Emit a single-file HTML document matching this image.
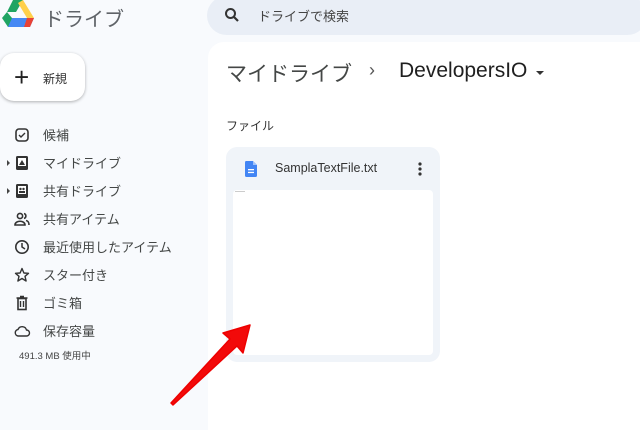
<!DOCTYPE html><html><head><meta charset="utf-8"><style>
*{margin:0;padding:0;box-sizing:border-box}
html,body{width:640px;height:430px;overflow:hidden}
body{background:#f8fafd;font-family:"Liberation Sans","Noto Sans CJK JP",sans-serif;position:relative;color:#1f1f1f}
.a{position:absolute}
.nav{left:0;height:28px;width:205px}
.nav .ic{position:absolute;left:14px;top:6px;width:16px;height:16px}
.nav .t{position:absolute;left:43px;top:4px;font-size:13px;color:#444746}
</style></head><body>
<svg class="a" style="left:2px;top:0" width="34" height="28" viewBox="0 0 34 28">
<path d="M11 0 L21 0 L14 12 L5 12 Z" fill="#1fa463"/>
<path d="M21 0 L32 18 L25 18 L16 3 Z" fill="#ffd04b"/>
<path d="M3 18 L25 18 L32 18 L28 27 L6 27 Z" fill="#4688f4"/>
<path d="M0 18 L5 12 L10 18 L6 27 Z" fill="#1fa463"/>
<path d="M25 18 L32 18 L28 27 L22 27Z" fill="#e94235"/>
</svg>
<div class="a" style="left:44px;top:3px;font-size:20px;color:#5f6368">ドライブ</div>
<div class="a" style="left:207px;top:-4px;width:440px;height:39px;border-radius:20px;background:#e9eef6"></div>
<svg class="a" style="left:224px;top:7px" width="16" height="16" viewBox="0 0 16 16"><circle cx="6.5" cy="6.5" r="4.5" fill="none" stroke="#333" stroke-width="2"/><path d="M10 10 L14 14" stroke="#333" stroke-width="2.2"/></svg>
<div class="a" style="left:258px;top:6px;font-size:13px;color:#444">ドライブで検索</div>
<div class="a" style="left:0;top:53px;width:85px;height:48px;border-radius:14px;background:#fff;box-shadow:0 1px 3px rgba(0,0,0,.3)"></div>
<div class="a" style="left:14px;top:62px;font-size:26px;font-weight:300;color:#222">+</div>
<div class="a" style="left:43px;top:70px;font-size:12px;color:#333">新規</div>
<div class="a nav" style="top:121px"><svg class="ic" viewBox="0 0 16 16"><rect x="2" y="2" width="12" height="12" rx="3" fill="none" stroke="#333" stroke-width="1.6"/><path d="M5 8 L7 10 L11 6" fill="none" stroke="#333" stroke-width="1.4"/></svg><div class="t">候補</div></div>
<div class="a nav" style="top:149px"><div class="a" style="left:7px;top:11px;border-left:3px solid #444;border-top:3px solid transparent;border-bottom:3px solid transparent"></div><svg class="ic" viewBox="0 0 16 16"><rect x="2" y="1" width="12" height="14" rx="1.5" fill="#333"/><rect x="4" y="3" width="8" height="8" fill="#fff"/><path d="M5 10 L8 5 L11 10Z" fill="#333"/></svg><div class="t">マイドライブ</div></div>
<div class="a nav" style="top:177px"><div class="a" style="left:7px;top:11px;border-left:3px solid #444;border-top:3px solid transparent;border-bottom:3px solid transparent"></div><svg class="ic" viewBox="0 0 16 16"><rect x="2" y="1" width="12" height="14" rx="1.5" fill="#333"/><rect x="4" y="3" width="8" height="8" fill="#fff"/><circle cx="6.5" cy="6" r="1.2" fill="#333"/><circle cx="9.5" cy="6" r="1.2" fill="#333"/><rect x="5" y="8" width="6" height="2" fill="#333"/></svg><div class="t">共有ドライブ</div></div>
<div class="a nav" style="top:205px"><svg class="ic" viewBox="0 0 16 16"><circle cx="6" cy="5" r="2.6" fill="none" stroke="#333" stroke-width="1.6"/><path d="M1 14 C1 9 11 9 11 14Z" fill="none" stroke="#333" stroke-width="1.6"/><path d="M10 2.5 A2.6 2.6 0 0 1 10 7.5 M12 9.5 C14 10 15 11 15 14" fill="none" stroke="#333" stroke-width="1.6"/></svg><div class="t">共有アイテム</div></div>
<div class="a nav" style="top:233px"><svg class="ic" viewBox="0 0 16 16"><circle cx="8" cy="8" r="6.2" fill="none" stroke="#333" stroke-width="1.6"/><path d="M8 4 V8 L11 10" fill="none" stroke="#333" stroke-width="1.5"/></svg><div class="t">最近使用したアイテム</div></div>
<div class="a nav" style="top:261px"><svg class="ic" viewBox="0 0 16 16"><path d="M8 1.5 L9.9 6 L14.5 6.3 L11 9.3 L12.1 14 L8 11.5 L3.9 14 L5 9.3 L1.5 6.3 L6.1 6Z" fill="none" stroke="#333" stroke-width="1.4" stroke-linejoin="round"/></svg><div class="t">スター付き</div></div>
<div class="a nav" style="top:289px"><svg class="ic" viewBox="0 0 16 16"><path d="M2.5 3 H13.5 M6 1.5 H10" stroke="#333" stroke-width="1.6"/><rect x="4" y="3.5" width="8" height="11" fill="none" stroke="#333" stroke-width="1.6"/><path d="M6.5 6 V12 M9.5 6 V12" stroke="#333" stroke-width="1.4"/></svg><div class="t">ゴミ箱</div></div>
<div class="a nav" style="top:317px"><svg class="ic" viewBox="0 0 16 16" style="left:13px;width:18px"><path d="M4 13 H12.5 A3 3 0 0 0 12.5 7 A4.5 4.5 0 0 0 4 6.5 A3.3 3.3 0 0 0 4 13Z" fill="none" stroke="#333" stroke-width="1.4"/></svg><div class="t">保存容量</div></div>
<div class="a" style="left:19px;top:348px;font-size:9.5px;color:#444">491.3 MB 使用中</div>
<div class="a" style="left:208px;top:42px;width:450px;height:400px;background:#fff;border-radius:16px 0 0 0"></div>
<div class="a" style="left:226px;top:58px;font-size:21px;color:#444746">マイドライブ</div>
<div class="a" style="left:369px;top:60px;font-size:18px;color:#555">›</div>
<div class="a" style="left:399px;top:59px;font-size:21px;color:#1f1f1f">DevelopersIO</div>
<div class="a" style="left:536px;top:71px;border-top:4px solid #333;border-left:4px solid transparent;border-right:4px solid transparent"></div>
<div class="a" style="left:226px;top:117px;font-size:12px;color:#333">ファイル</div>
<div class="a" style="left:226px;top:147px;width:214px;height:215px;border-radius:11px;background:#f0f4f9"></div>
<svg class="a" style="left:244px;top:161px" width="14" height="16" viewBox="0 0 14 16"><path d="M1.5 0 H9 L13 4 V14.5 A1.5 1.5 0 0 1 11.5 16 H2.5 A1.5 1.5 0 0 1 1 14.5 V1.5Z" fill="#4285f4"/><path d="M9 0 V4 H13Z" fill="#a1c2fa"/><rect x="4" y="8" width="6" height="1.3" fill="#fff"/><rect x="4" y="10.8" width="6" height="1.3" fill="#fff"/></svg>
<div class="a" style="left:275px;top:161px;font-size:12.5px;color:#333">SamplaTextFile.txt</div>
<svg class="a" style="left:417px;top:161px" width="6" height="16"><circle cx="3" cy="3" r="1.6" fill="#333"/><circle cx="3" cy="8" r="1.6" fill="#333"/><circle cx="3" cy="13" r="1.6" fill="#333"/></svg>
<div class="a" style="left:233px;top:190px;width:200px;height:165px;background:#fff;border-radius:4px"></div>
<div class="a" style="left:235px;top:191px;width:10px;height:1px;background:#ccc"></div>
<svg class="a" style="left:0;top:0" width="640" height="430"><path d="M250 325 L243 353 L237 346 L173 405 L171 403 L230 339 L223 333Z" fill="#f20a0a" stroke="#e00" stroke-width="1.5" stroke-linejoin="round"/></svg>
</body></html>
